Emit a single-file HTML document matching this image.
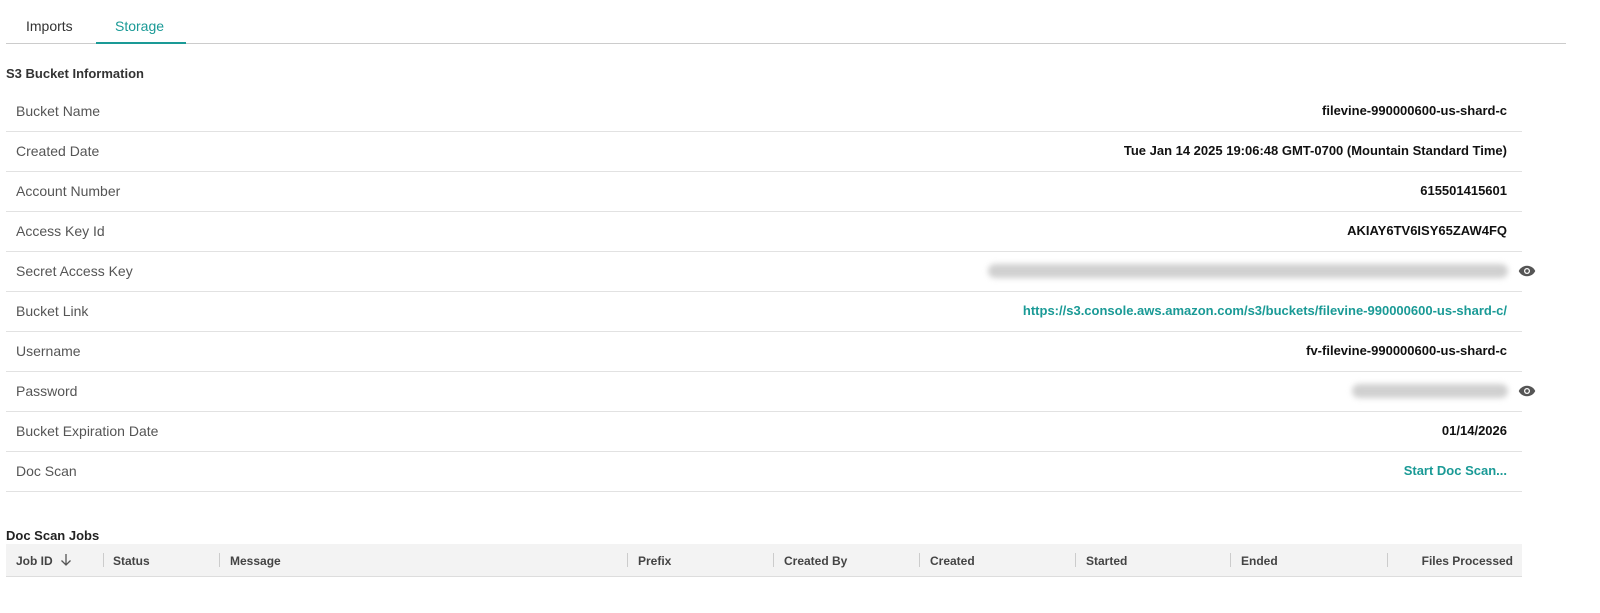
<!DOCTYPE html>
<html><head><style>
body{margin:0;background:#fff;font-family:"Liberation Sans",sans-serif;width:1600px;height:613px;overflow:hidden;position:relative;color:#333}
.abs{position:absolute}
.tab{position:absolute;top:18px;font-size:14px}
.row{position:absolute;left:6px;width:1516px;height:40px;border-bottom:1px solid #e2e2e2}
.row .l{position:absolute;left:10px;top:12px;font-size:14px;color:#555}
.row .v{position:absolute;right:15px;top:12px;font-size:13px;font-weight:bold;color:#111}
.blur{position:absolute;height:14px;top:13px;background:#d0d0d0;filter:blur(3px);border-radius:7px}
.eye{position:absolute;left:1518px;width:18px;height:12px}
.th{position:absolute;top:554px;font-size:12px;font-weight:bold;color:#444}
.sep{position:absolute;top:553px;width:1px;height:14px;background:#ccc}
</style></head><body>
<div class="tab" style="left:26px;color:#333">Imports</div>
<div class="tab" style="left:115px;color:#1a9a96">Storage</div>
<div class="abs" style="left:6px;top:43px;width:1560px;height:1px;background:#ccc"></div>
<div class="abs" style="left:96px;top:42px;width:90px;height:2px;background:#1a9a96"></div>
<div class="abs" style="left:6px;top:66px;font-size:13px;font-weight:bold;color:#333">S3 Bucket Information</div>

<div class="row" style="top:91px"><div class="l">Bucket Name</div><div class="v">filevine-990000600-us-shard-c</div></div>
<div class="row" style="top:131px"><div class="l">Created Date</div><div class="v">Tue Jan 14 2025 19:06:48 GMT-0700 (Mountain Standard Time)</div></div>
<div class="row" style="top:171px"><div class="l">Account Number</div><div class="v">615501415601</div></div>
<div class="row" style="top:211px"><div class="l">Access Key Id</div><div class="v">AKIAY6TV6ISY65ZAW4FQ</div></div>
<div class="row" style="top:251px"><div class="l">Secret Access Key</div><div class="blur" style="left:982px;width:520px"></div></div>
<div class="row" style="top:291px"><div class="l">Bucket Link</div><div class="v" style="color:#1a9a96">https://s3.console.aws.amazon.com/s3/buckets/filevine-990000600-us-shard-c/</div></div>
<div class="row" style="top:331px"><div class="l">Username</div><div class="v">fv-filevine-990000600-us-shard-c</div></div>
<div class="row" style="top:371px"><div class="l">Password</div><div class="blur" style="left:1346px;width:156px"></div></div>
<div class="row" style="top:411px"><div class="l">Bucket Expiration Date</div><div class="v">01/14/2026</div></div>
<div class="row" style="top:451px"><div class="l">Doc Scan</div><div class="v" style="color:#1a9a96">Start Doc Scan...</div></div>

<svg class="eye" style="top:265px" viewBox="0 0 24 16"><path d="M12 1C6.5 1 2.5 4.5 1 8c1.5 3.5 5.5 7 11 7s9.5-3.5 11-7C21.5 4.5 17.5 1 12 1z" fill="#555"/><circle cx="12" cy="8" r="4" fill="#fff"/><circle cx="12" cy="8" r="2.3" fill="#555"/></svg>
<svg class="eye" style="top:385px" viewBox="0 0 24 16"><path d="M12 1C6.5 1 2.5 4.5 1 8c1.5 3.5 5.5 7 11 7s9.5-3.5 11-7C21.5 4.5 17.5 1 12 1z" fill="#555"/><circle cx="12" cy="8" r="4" fill="#fff"/><circle cx="12" cy="8" r="2.3" fill="#555"/></svg>

<div class="abs" style="left:6px;top:528px;font-size:13px;font-weight:bold;color:#222">Doc Scan Jobs</div>
<div class="abs" style="left:6px;top:544px;width:1516px;height:32px;background:#f3f3f3;border-bottom:1px solid #ddd"></div>
<div class="th" style="left:16px">Job ID</div>
<svg class="abs" style="left:60px;top:553px" width="12" height="14" viewBox="0 0 12 14"><path d="M6 1v11M1.5 7.5L6 12l4.5-4.5" stroke="#555" stroke-width="1.3" fill="none"/></svg>
<div class="sep" style="left:103px"></div><div class="th" style="left:113px">Status</div>
<div class="sep" style="left:219px"></div><div class="th" style="left:230px">Message</div>
<div class="sep" style="left:627px"></div><div class="th" style="left:638px">Prefix</div>
<div class="sep" style="left:773px"></div><div class="th" style="left:784px">Created By</div>
<div class="sep" style="left:919px"></div><div class="th" style="left:930px">Created</div>
<div class="sep" style="left:1075px"></div><div class="th" style="left:1086px">Started</div>
<div class="sep" style="left:1230px"></div><div class="th" style="left:1241px">Ended</div>
<div class="sep" style="left:1387px"></div><div class="th" style="right:87px">Files Processed</div>
</body></html>
